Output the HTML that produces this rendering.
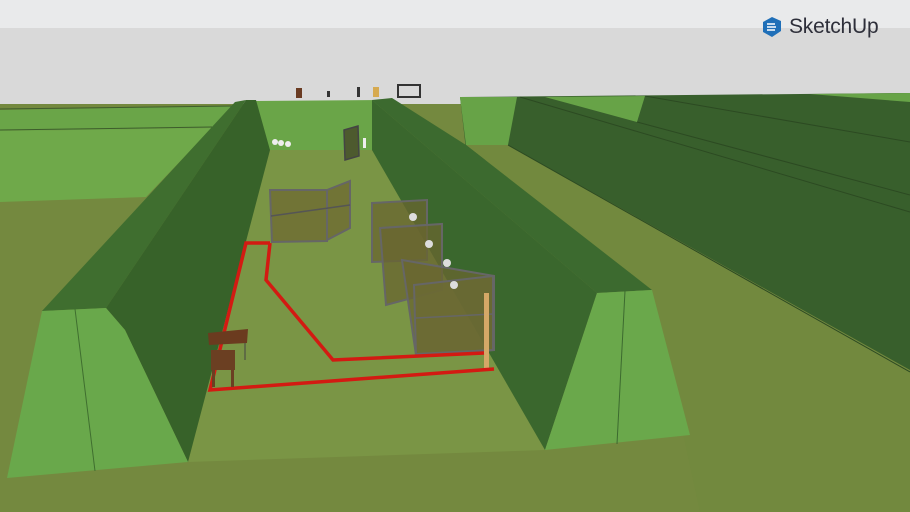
<!DOCTYPE html>
<html><head><style>
html,body{margin:0;padding:0;width:910px;height:512px;overflow:hidden;background:#72893f}
svg{display:block}
.logo{position:absolute;left:761px;top:15px;display:flex;align-items:center;font-family:"Liberation Sans",sans-serif;font-size:21px;color:#2e2f3a;letter-spacing:-0.2px}
</style></head><body>
<svg width="910" height="512" viewBox="0 0 910 512">
<rect x="0" y="0" width="910" height="30" fill="#e9eaeb"/>
<rect x="0" y="28" width="910" height="80" fill="#d9d9d9"/>
<rect x="0" y="104" width="910" height="408" fill="#74893f"/>
<polygon points="0,110 232,106 212,128 0,131" fill="#6aa548"/>
<polygon points="0,131 212,128 146,197 0,202" fill="#6fa94a"/>
<line x1="0" y1="130" x2="212" y2="127" stroke="#3e5d2c" stroke-width="1"/>
<line x1="0" y1="109" x2="232" y2="106" stroke="#3e5d2c" stroke-width="1"/>
<polygon points="270,150 372,150 545,450 188,462" fill="#7a9545"/>
<polygon points="253,101 382,100 372,150 270,150" fill="#6aa548"/>
<polygon points="460,97 910,93 910,380 466,150" fill="#385f2c"/>
<polygon points="460,97 517,97 508,145 466,145" fill="#67a347"/>
<polygon points="545,97 645,96 637,122" fill="#67a347"/>
<polygon points="810,94 910,93 910,102" fill="#67a347"/>
<polygon points="466,145 508,145 910,370 910,512 700,512 652,290" fill="#72893e"/>
<line x1="520" y1="97" x2="910" y2="212" stroke="#2c4a22" stroke-width="1"/>
<line x1="645" y1="96" x2="910" y2="142" stroke="#2c4a22" stroke-width="1"/>
<line x1="637" y1="122" x2="910" y2="195" stroke="#2c4a22" stroke-width="1"/>
<line x1="508" y1="145" x2="910" y2="372" stroke="#2c4a22" stroke-width="1"/>
<polygon points="372,100 392,98 466,145 652,290 597,293" fill="#3c6a2f"/>
<polygon points="372,100 597,293 545,450 372,150" fill="#3a672d"/>
<polygon points="597,293 652,290 690,435 545,450" fill="#6aa84b"/>
<line x1="625" y1="291" x2="617" y2="444" stroke="#3c6a2f" stroke-width="1"/>
<polygon points="235,102 246,100 106,308 42,311" fill="#3f6e2f"/>
<polygon points="246,100 256,100 270,150 188,462 125,330 106,308" fill="#376229"/>
<polygon points="42,311 106,308 125,330 188,462 7,478" fill="#69a84b"/>
<line x1="75" y1="309" x2="95" y2="471" stroke="#3f6e2f" stroke-width="1"/>
<rect x="296" y="88" width="6" height="10" fill="#6a3b22"/>
<rect x="327" y="91" width="3" height="6" fill="#333"/>
<rect x="357" y="87" width="3" height="10" fill="#333"/>
<rect x="373" y="87" width="6" height="10" fill="#d6aa50"/>
<rect x="398" y="85" width="22" height="12" fill="none" stroke="#333" stroke-width="2"/>
<circle cx="275" cy="142" r="3" fill="#eee"/><circle cx="281" cy="143" r="3" fill="#eee"/><circle cx="288" cy="144" r="3" fill="#eee"/>
<polygon points="344,130 358,126 359,156 345,160" fill="#4d5a2e" stroke="#444" stroke-width="1.5"/>
<rect x="363" y="138" width="3" height="10" fill="#eee"/>
<polygon points="270,190 327,190 327,241 272,242" fill="#6f6b32" fill-opacity="0.8" stroke="#666" stroke-width="2"/>
<polygon points="327,190 350,181 350,228 327,240" fill="#6f6b32" fill-opacity="0.8" stroke="#666" stroke-width="2"/>
<line x1="271" y1="216" x2="350" y2="205" stroke="#555" stroke-width="1.5"/>
<polygon points="372,203 427,200 427,260 372,262" fill="#6a6630" fill-opacity="0.75" stroke="#666" stroke-width="2"/>
<polygon points="380,228 442,224 442,290 386,305" fill="#6a6630" fill-opacity="0.75" stroke="#666" stroke-width="2"/>
<polygon points="402,260 494,276 494,350 416,355" fill="#6a6630" fill-opacity="0.75" stroke="#666" stroke-width="2"/>
<polygon points="414,285 493,276 493,350 416,354" fill="#6b6a35" fill-opacity="0.8" stroke="#666" stroke-width="2"/>
<line x1="416" y1="318" x2="493" y2="314" stroke="#666" stroke-width="1.5"/>
<circle cx="413" cy="217" r="4" fill="#ddd"/><circle cx="429" cy="244" r="4" fill="#ddd"/><circle cx="447" cy="263" r="4" fill="#ddd"/><circle cx="454" cy="285" r="4" fill="#ddd"/>
<rect x="484" y="293" width="5" height="75" fill="#d5a867"/>
<polyline points="270,243 246,243 210,390 494,369" fill="none" stroke="#d31a12" stroke-width="3.5"/>
<polyline points="270,243 266,280 333,360 484,353" fill="none" stroke="#d31a12" stroke-width="3.5"/>
<polygon points="208,333 248,329 247,343 209,345" fill="#6b3b1f"/>
<line x1="245" y1="343" x2="245" y2="360" stroke="#444"/>
<rect x="211" y="350" width="24" height="20" fill="#6b3f22"/>
<rect x="212" y="370" width="3" height="17" fill="#6b3f22"/><rect x="231" y="370" width="3" height="17" fill="#6b3f22"/>
</svg>
<div class="logo"><svg width="22" height="22" viewBox="0 0 22 22" style="margin-right:6px"><path d="M11 1 L20 5 V15 L11 21 L2 16 V6 Z" fill="#1f6fb8"/><path d="M6 8 H14 M6 11 H15 M6 14 H14" stroke="#fff" stroke-width="1.6"/></svg>SketchUp</div>
</body></html>
